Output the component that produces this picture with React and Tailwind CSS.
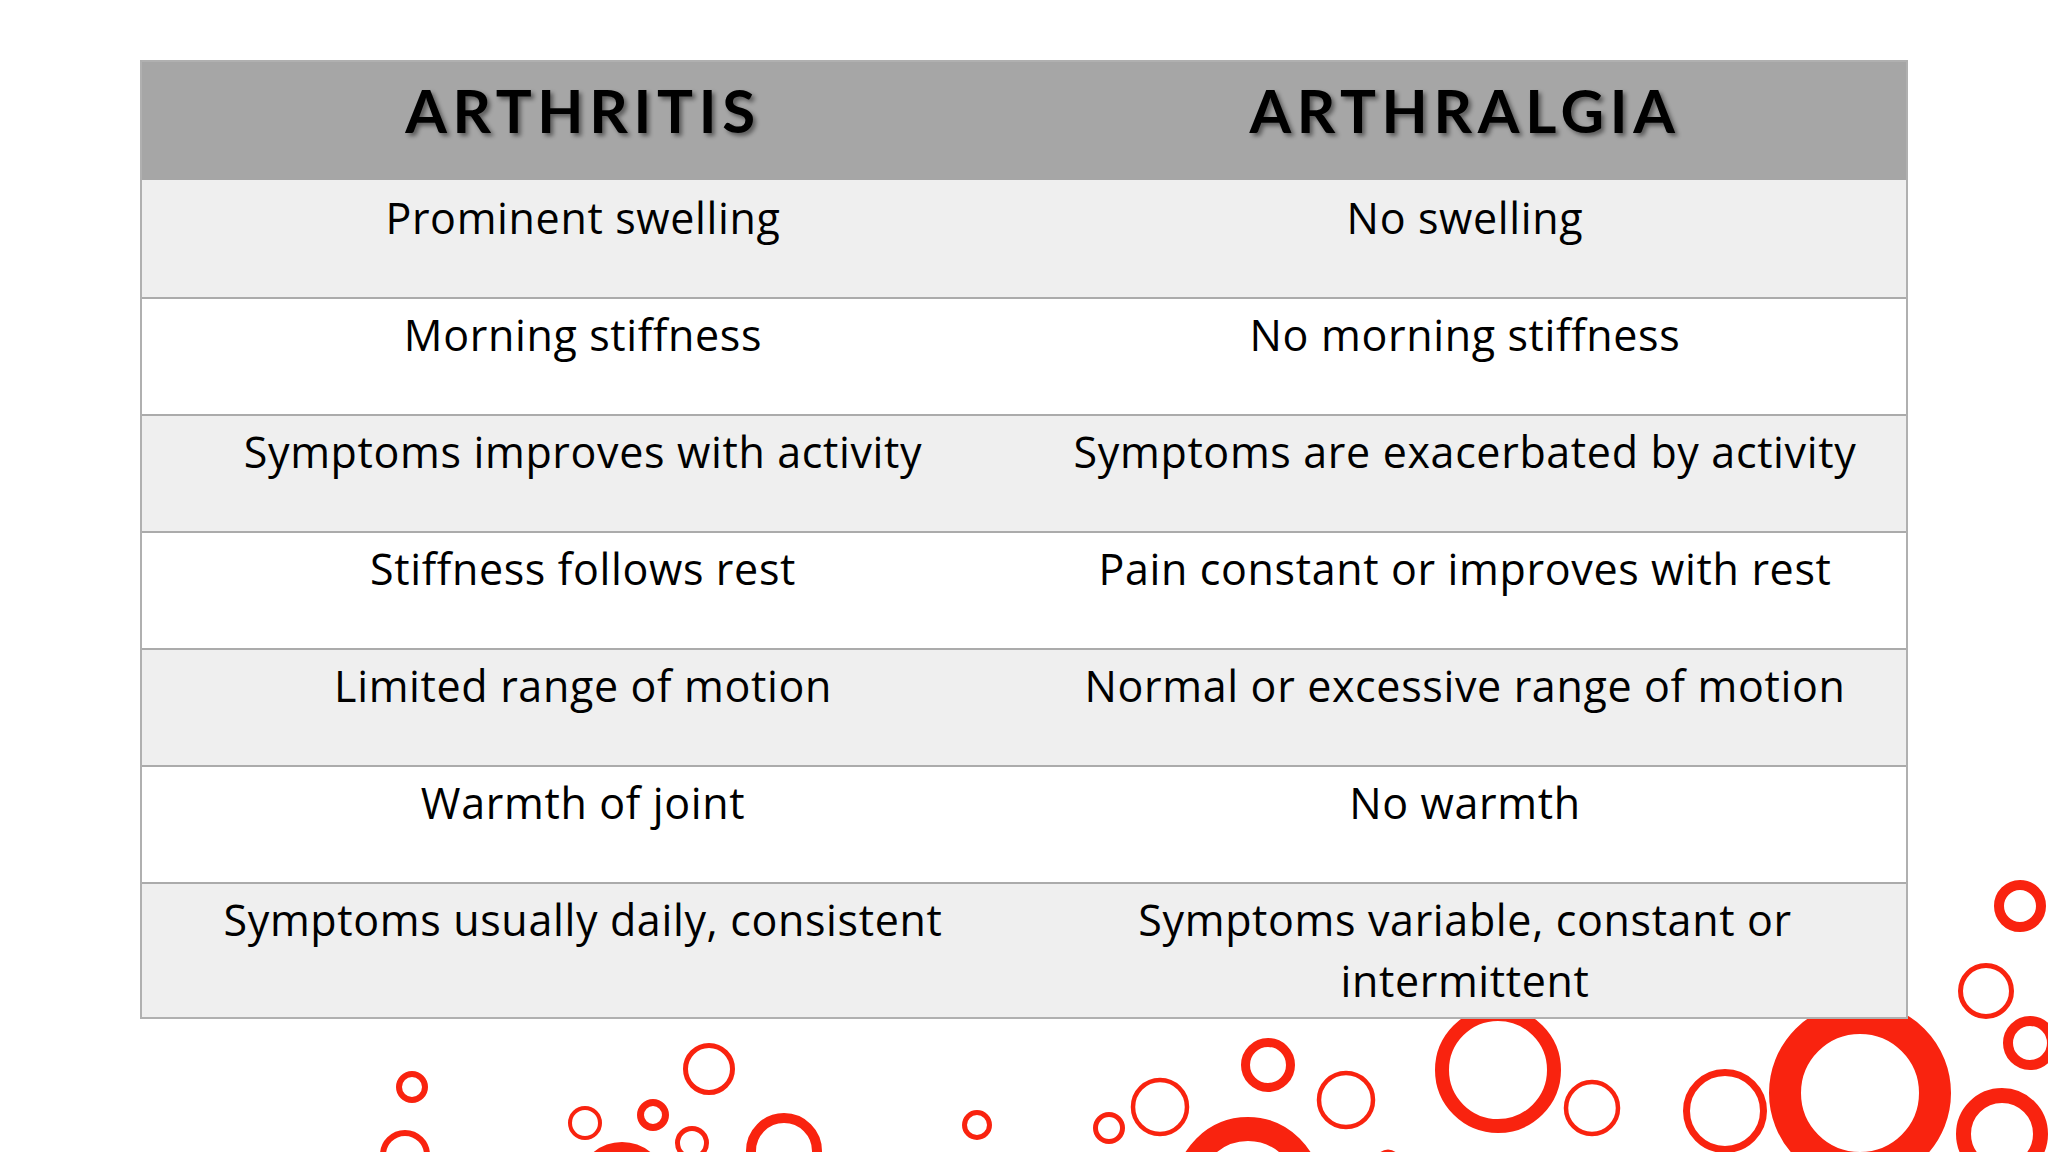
import React from 'react';

const rows = [
  ['Prominent swelling', 'No swelling'],
  ['Morning stiffness', 'No morning stiffness'],
  ['Symptoms improves with activity', 'Symptoms are exacerbated by activity'],
  ['Stiffness follows rest', 'Pain constant or improves with rest'],
  ['Limited range of motion', 'Normal or excessive range of motion'],
  ['Warmth of joint', 'No warmth'],
  ['Symptoms usually daily, consistent', <>Symptoms variable, constant or<br />intermittent</>],
];

// [cx, cy, r, strokeWidth]
const rings = [
  [412, 1087, 13, 6],
  [405, 1155, 22, 6],
  [585, 1123, 15, 4],
  [653, 1115, 12.5, 7],
  [709, 1069, 23.5, 5],
  [692, 1143, 14.5, 5],
  [622, 1187, 35, 20],
  [784, 1151, 33, 10],
  [977, 1125, 12.5, 5],
  [1109, 1128, 13.5, 5],
  [1160, 1107, 27, 4.5],
  [1268, 1065, 22.5, 9],
  [1346, 1100, 27, 4.5],
  [1248, 1190, 61, 24],
  [1388, 1162, 10, 5],
  [1498, 1070, 56, 14],
  [1592, 1108, 26, 4.5],
  [1725, 1111, 38.5, 7],
  [1860, 1093, 75, 32],
  [2020, 906, 21, 10],
  [1986, 991, 25.5, 5],
  [2030, 1043, 22, 10],
  [2002, 1134, 38.5, 15],
];

function Bubbles() {
  return (
    <svg className="absolute inset-0 pointer-events-none" width="2048" height="1152" viewBox="0 0 2048 1152">
      {rings.map(([cx, cy, r, sw], i) => (
        <circle key={i} cx={cx} cy={cy} r={r} fill="none" stroke="#f9230f" strokeWidth={sw} />
      ))}
    </svg>
  );
}

export default function App() {
  const headStyle = "text-center font-['Lato',sans-serif] font-bold text-[60px] leading-[60px] tracking-[0.095em] text-black pt-[18px] [text-shadow:3px_3px_4px_rgba(0,0,0,0.45)]";
  return (
    <div className="relative w-full h-[1152px] bg-white overflow-hidden font-['Open_Sans',sans-serif]">
      <Bubbles />
      <div className="relative z-10 pt-[60px] pl-[140px]">
        <div className="w-[1768px] border-2 border-[#b0b0b0]">
          <div className="grid grid-cols-2 h-[118px] bg-[#a6a6a6]">
            <div className={headStyle}>ARTHRITIS</div>
            <div className={headStyle}>ARTHRALGIA</div>
          </div>
          {rows.map(([a, b], i) => (
            <div
              key={i}
              className={
                "grid grid-cols-2 border-t-2 text-[43px] leading-[61px] tracking-[0.015em] text-black " +
                (i === 0 ? "border-transparent " : "border-[#ababab] ") +
                (i % 2 === 0 ? "bg-[#efefef] " : "bg-white ") +
                (i === rows.length - 1 ? "h-[135px]" : "h-[117px]")
              }
            >
              <div className="text-center pt-[5px] px-4">{a}</div>
              <div className="text-center pt-[5px] px-4">{b}</div>
            </div>
          ))}
        </div>
      </div>
    </div>
  );
}
